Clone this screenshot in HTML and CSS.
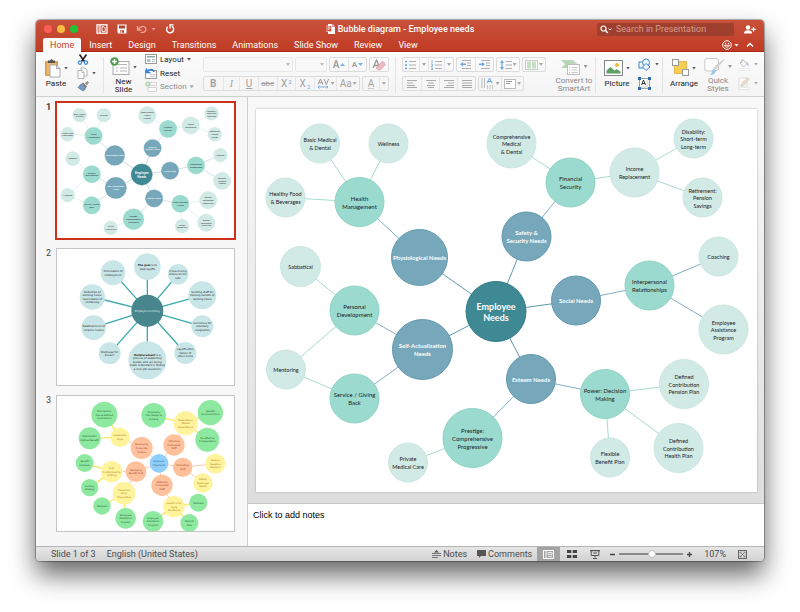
FILE: index.html
```html
<!DOCTYPE html>
<html lang="en">
<head>
    <meta charset="UTF-8">
    <meta name="viewport" content="width=device-width, initial-scale=1.0">
    <title>Bubble diagram - Employee needs</title>
    <link rel="stylesheet" href="styles.css">
</head>
<body>
    <div class="window">
        <header class="header">
            <div class="titlebar">
                <div class="titlebar-left">
                    <button class="light light-close" aria-label="Close"></button>
                    <button class="light light-min" aria-label="Minimize"></button>
                    <button class="light light-max" aria-label="Zoom"></button>
                    <div class="quick">
                        <button aria-label="Gallery"><svg width="12" height="10" viewBox="0 0 12 10"><rect x="1" y=".8" width="10" height="8.4" fill="none" stroke="#fff" stroke-width="1.3"/><path d="M4 1v8" stroke="#fff" stroke-width="1.2"/><path d="M2 3h1M2 5h1M2 7h1" stroke="#fff" stroke-width=".8"/><path d="M6 2.8h2l1.2 1.2v3.4H6z" fill="none" stroke="#fff" stroke-width=".9"/></svg></button>
                        <button aria-label="Save"><svg width="10" height="10" viewBox="0 0 10 10"><path d="M.5.5h9v9h-8l-1-1z" fill="#fff"/><path d="M2 1.4h6v3H2z" fill="#b8432d"/><path d="M3 6.3h4v2.5H3z" fill="#b8432d"/><path d="M3.6 7h1.2v1.8H3.6z" fill="#fff"/></svg></button>
                        <button class="faded" aria-label="Undo"><svg width="20" height="10" viewBox="0 0 20 10"><path d="M1.5 2v4h4M1.8 5.8C4 2.6 6 2 8 2.6c2.8.9 2.6 4.6-.6 5.800H4.500" fill="none" stroke="#fff" stroke-width="1.300"/><path d="M15.500 4h4l-2 2.600z" fill="#fff"/></svg></button>
                        <button aria-label="Redo"><svg width="10" height="10" viewBox="0 0 10 10"><path d="M6.800 2.200A3.500 3.500 0 1 1 2.600 2.800" fill="none" stroke="#fff" stroke-width="1.500"/><path d="M5 0v4.600M4.600.9h4" fill="none" stroke="#fff" stroke-width="1.300"/></svg></button>
                    </div>
                </div>
                <h1 class="doc-title">
                    <svg width="9" height="10" viewBox="0 0 9 10"><path d="M2 0h4.500L9 2.500V10H2z" fill="#fff"/><path d="M6.500 0v2.500H9" fill="none" stroke="#c34" stroke-width=".5"/><rect y="2" width="5.500" height="5.500" fill="#c9492f" stroke="#fff" stroke-width=".5"/><path d="M2 6.500V3.300h1.200q1 0 1 .9t-1 .9H2" fill="none" stroke="#fff" stroke-width=".7"/></svg>
                    Bubble diagram - Employee needs
                </h1>
                <div class="titlebar-right">
                    <label class="search">
                        <svg width="12" height="9" viewBox="0 0 12 9"><circle cx="3.500" cy="3.500" r="2.500" fill="none" stroke="#fff" stroke-width="1.200"/><path d="M5.300 5.300l2.500 2.700" stroke="#fff" stroke-width="1.400"/><path d="M8.500 3.500l1.500 1.500 1.500-1.500" fill="none" stroke="#fff"/></svg>
                        <input type="search" placeholder="Search in Presentation" aria-label="Search in Presentation">
                    </label>
                    <button class="share" aria-label="Share"><svg width="12" height="9" viewBox="0 0 12 9"><circle cx="4" cy="2.500" r="2.200" fill="#fff"/><path d="M0 8.500C0 5.800 1.500 5.200 4 5.200s4 .6 4 3.300z" fill="#fff"/><path d="M9.500 2v4.600M7.200 4.300h4.600" stroke="#fff" stroke-width="1.300"/></svg></button>
                </div>
            </div>
            <nav class="tabs">
                <a class="tab tab-active" href="#home">Home</a>
                <a class="tab" href="#insert">Insert</a>
                <a class="tab" href="#design">Design</a>
                <a class="tab" href="#transitions">Transitions</a>
                <a class="tab" href="#animations">Animations</a>
                <a class="tab" href="#slideshow">Slide Show</a>
                <a class="tab" href="#review">Review</a>
                <a class="tab" href="#view">View</a>
                <div class="tabs-right">
                    <button aria-label="Feedback"><svg width="17" height="10" viewBox="0 0 17 10"><circle cx="5" cy="5" r="4.300" fill="none" stroke="#fff"/><path d="M2.500 5.300a2.600 2.600 0 0 0 5 0z" fill="none" stroke="#fff" stroke-width=".9"/><circle cx="3.500" cy="3.500" r=".7" fill="#fff"/><circle cx="6.500" cy="3.500" r=".7" fill="#fff"/><path d="M12.500 4h4l-2 2.500z" fill="#fff"/></svg></button>
                    <button aria-label="Collapse ribbon"><svg width="8" height="6" viewBox="0 0 8 6"><path d="M1 4.500l3-3 3 3" fill="none" stroke="#fff" stroke-width="1.500"/></svg></button>
                </div>
            </nav>
        </header>

        <div class="ribbon">
            <div class="group group-clipboard">
                <button class="big">
                    <span class="big-top"><svg width="17" height="20" viewBox="0 0 17 20"><rect x="1" y="3" width="13" height="15" rx="1" fill="#dba24d"/><rect x="3" y="5" width="9" height="11" fill="#e9bb74"/><path d="M4 5V2.500h2Q7.500-.5 9 2.500h2V5z" fill="#555"/><path d="M6 7h6.500L16 10.500V19H6z" fill="#fff" stroke="#999" stroke-width=".8"/><path d="M12.500 7v3.500H16" fill="none" stroke="#999" stroke-width=".8"/></svg><i class="caret"></i></span>
                    <span>Paste</span>
                </button>
                <div class="stack">
                    <button aria-label="Cut"><svg width="12" height="11" viewBox="0 0 12 11"><path d="M2.500.5l5 7M9.500.5l-5 7" stroke="#222" stroke-width="1.600"/><circle cx="3" cy="8.600" r="1.700" fill="none" stroke="#3b8ede" stroke-width="1.200"/><circle cx="9" cy="8.600" r="1.700" fill="none" stroke="#3b8ede" stroke-width="1.200"/></svg></button>
                    <button aria-label="Copy"><svg width="11" height="12" viewBox="0 0 11 12"><g fill="#fff" stroke="#aaa" stroke-width=".9"><path d="M4 1h4l2 2v6H4z"/><path d="M1 3.500h4l2 2v6H1z"/><path d="M5 3.500v2h2"/></g></svg><i class="caret"></i></button>
                    <button aria-label="Format painter"><svg width="12" height="11" viewBox="0 0 12 11"><path d="M8 2.500L10.500.5l1 1L9.700 4" fill="#999" stroke="#777" stroke-width=".7"/><path d="M4.500 2.500l1.500-1 4 4-1.500 2z" fill="#777"/><path d="M4 3l4.500 5-2.500 2-5-3.500z" fill="#6d9cc9" stroke="#47698c" stroke-width=".6"/></svg></button>
                </div>
            </div>

            <div class="group group-slides">
                <button class="big">
                    <span class="big-top"><svg width="20" height="20" viewBox="0 0 20 20"><rect x="3" y="4.500" width="16" height="13" fill="#fff" stroke="#aaa"/><path d="M7 7.500h10M6 11h2M10 11h7M6 14h2M10 14h7" stroke="#b5b5b5"/><circle cx="4.500" cy="4.500" r="4.200" fill="#4a9e45"/><path d="M4.500 2v5M2 4.500h5" stroke="#fff" stroke-width="1.500"/></svg><i class="caret"></i></span>
                    <span>New<br>Slide</span>
                </button>
                <div class="stack stack-text">
                    <button><svg width="12" height="10" viewBox="0 0 12 10"><rect x=".5" y=".5" width="11" height="9" fill="#fff" stroke="#999"/><path d="M2 2.800h8" stroke="#8aa" stroke-width="1.500"/><rect x="2" y="5" width="3.500" height="3" fill="#a9c1d4"/><path d="M7 5.500h3M7 7.500h3" stroke="#aaa" stroke-width=".8"/></svg>Layout<i class="caret"></i></button>
                    <button><svg width="12" height="11" viewBox="0 0 12 11"><rect x=".5" y="2.500" width="11" height="8" fill="#fff" stroke="#999"/><path d="M5 6.500h5M5 8.500h5" stroke="#bbb" stroke-width=".8"/><path d="M1.500.5v4h4M1.800 4C4 .5 8 .5 9 4" fill="none" stroke="#2d7fd3" stroke-width="1.500"/></svg>Reset</button>
                    <button class="faded"><svg width="12" height="11" viewBox="0 0 12 11"><rect x="5" y="1.500" width="6.500" height="3" fill="#fff" stroke="#999" stroke-width=".7"/><rect x="3" y="6.500" width="8.500" height="4" fill="#fff" stroke="#999" stroke-width=".7"/><circle cx="2.800" cy="3" r="2.500" fill="#58a854"/><path d="M2.800 1.500v3M1.300 3h3" stroke="#fff" stroke-width=".8"/></svg>Section<i class="caret"></i></button>
                </div>
            </div>

            <div class="group group-font">
                <div class="tool-row">
                    <div class="combo combo-font"><select disabled aria-label="Font"><option></option></select></div>
                    <div class="combo combo-size"><select disabled aria-label="Font size"><option></option></select></div>
                    <div class="segment">
                        <button class="w18" aria-label="Increase font size"><b class="glyph">A</b><svg width="5" height="3" viewBox="0 0 5 3"><path d="M0 3L2.500 0 5 3z" fill="#7fb2e2"/></svg></button>
                        <button class="w18" aria-label="Decrease font size"><b>A</b><svg width="5" height="3" viewBox="0 0 5 3"><path d="M0 0h5L2.500 3z" fill="#7fb2e2"/></svg></button>
                    </div>
                    <div class="segment">
                        <button class="w18" aria-label="Clear formatting"><svg width="14" height="12" viewBox="0 0 14 12"><path d="M1 9L4.500 1 8 9M2.300 6.500h4.400" fill="none" stroke="#999" stroke-width="1.300"/><path d="M4.500 8.500l5-5.500q1-.8 2 0l1.500 1.400q.8.9 0 1.800l-4.500 4.600q-1 .8-2 0L4.500 9.800q-.5-.6 0-1.300z" fill="#eeb9c1" stroke="#d89aa5" stroke-width=".6"/></svg></button>
                    </div>
                </div>
                <div class="tool-row">
                    <div class="segment segment-fill">
                        <button class="w18"><b class="glyph">B</b></button>
                        <button class="w16"><i class="glyph serif">I</i></button>
                        <button class="w18"><u class="glyph">U</u></button>
                        <button class="w18"><s>abc</s></button>
                        <button class="w18"><span class="glyph">X</span><sup>2</sup></button>
                        <button class="w18"><span class="glyph">X</span><sub>2</sub></button>
                        <button class="w22" aria-label="Character spacing"><svg width="13" height="11" viewBox="0 0 13 11"><path d="M1 6.500L3.500 1 6 6.500M2 4.700h3M7 1l2.300 5.500L11.600 1" fill="none" stroke="#999"/><path d="M1 9h10M2.500 7.500L1 9l1.500 1.500M9.500 7.500L11 9l-1.500 1.500" fill="none" stroke="#7fb2e2"/></svg><i class="caret"></i></button>
                        <button class="w22" aria-label="Change case"><span class="glyph">Aa</span><i class="caret"></i></button>
                    </div>
                    <div class="segment">
                        <button class="w16"><span class="glyph underbar">A</span></button>
                        <button class="w8" aria-label="Font color"><i class="caret"></i></button>
                    </div>
                </div>
            </div>

            <div class="group group-paragraph">
                <div class="tool-row">
                    <div class="segment">
                        <button class="w16" aria-label="Bullets"><svg width="12" height="10" viewBox="0 0 12 10"><path d="M0 1.500h2M0 5h2M0 8.500h2" stroke="#6aa6df" stroke-width="1.600"/><path d="M4 1.500h7M4 5h7M4 8.500h7" stroke="#b0b0b0"/></svg></button>
                        <button class="w8" aria-label="Bullet styles"><i class="caret"></i></button>
                        <button class="w16" aria-label="Numbering"><svg width="12" height="10" viewBox="0 0 12 10"><path d="M1 0v3M0 4h1.500v1L.3 6.500h1.500M0 8h1.500v1.500H0" fill="none" stroke="#6aa6df" stroke-width=".8"/><path d="M4 1.500h7M4 5h7M4 8.500h7" stroke="#b0b0b0"/></svg></button>
                        <button class="w8" aria-label="Numbering styles"><i class="caret"></i></button>
                    </div>
                    <div class="segment">
                        <button class="w18" aria-label="Decrease indent"><svg width="12" height="9" viewBox="0 0 12 9"><path d="M2 .5h9M7 3h4M7 5.500h4M2 8.500h9" stroke="#b0b0b0"/><path d="M0 4.300L3 2v1.500h3v1.600H3v1.500z" fill="#6aa6df"/></svg></button>
                        <button class="w18" aria-label="Increase indent"><svg width="12" height="9" viewBox="0 0 12 9"><path d="M2 .5h9M7 3h4M7 5.500h4M2 8.500h9" stroke="#b0b0b0"/><path d="M6 4.300L3 2v1.500H0v1.600h3v1.500z" fill="#6aa6df"/></svg></button>
                    </div>
                    <div class="segment">
                        <button class="w22" aria-label="Line spacing"><svg width="12" height="10" viewBox="0 0 12 10"><path d="M2 1v8" stroke="#6aa6df" stroke-width="1.200"/><path d="M0 3L2 0l2 3zM0 7l2 3 2-3z" fill="#6aa6df"/><path d="M5.500 1.500H12M5.500 5H12M5.500 8.500H12" stroke="#b0b0b0"/></svg><i class="caret"></i></button>
                    </div>
                    <div class="segment">
                        <button class="w22" aria-label="Columns"><svg width="13" height="10" viewBox="0 0 13 10"><rect x=".5" y=".5" width="12" height="9" fill="#fff" stroke="#ccc"/><path d="M2 1.500h4v7H2zM7 1.500h4v7H7z" fill="#c5e0c2"/></svg><i class="caret"></i></button>
                    </div>
                </div>
                <div class="tool-row">
                    <div class="segment">
                        <button class="w18" aria-label="Align left"><svg width="10" height="8" viewBox="0 0 10 8"><path d="M0 .5h10M0 3h6M0 5.500h8M0 7.500h10" stroke="#aaa"/></svg></button>
                        <button class="w18" aria-label="Center"><svg width="10" height="8" viewBox="0 0 10 8"><path d="M0 .5h10M2 3h6M1 5.500h8M2 7.500h6" stroke="#aaa"/></svg></button>
                        <button class="w18" aria-label="Align right"><svg width="10" height="8" viewBox="0 0 10 8"><path d="M0 .5h10M4 3h6M2 5.500h8M0 7.500h10" stroke="#aaa"/></svg></button>
                        <button class="w18" aria-label="Justify"><svg width="10" height="8" viewBox="0 0 10 8"><path d="M0 .5h10M0 3h10M0 5.500h10M0 7.500h10" stroke="#aaa"/></svg></button>
                    </div>
                    <div class="segment">
                        <button class="w22" aria-label="Text direction"><svg width="14" height="11" viewBox="0 0 14 11"><path d="M1 0v10M3.500 0v10" stroke="#bbb"/><path d="M6 5l2.500-5L11 5M7 3.500h3" fill="none" stroke="#6aa6df"/><path d="M6.500 7v4M9 7v4M11.500 7v4" stroke="#bbb" stroke-width=".8"/></svg><i class="caret"></i></button>
                        <button class="w22" aria-label="Align text"><svg width="12" height="10" viewBox="0 0 12 10"><rect x=".5" y=".5" width="11" height="9" fill="#fff" stroke="#bbb"/><path d="M2 2.500h6M2 4.500h4" stroke="#999"/></svg><i class="caret"></i></button>
                    </div>
                </div>
            </div>

            <div class="group group-smartart">
                <button class="big disabled">
                    <span class="big-top"><svg width="20" height="18" viewBox="0 0 20 18"><path d="M0 2h12l4 4-4 4H0l4-4z" fill="#8fc08d"/><rect x="6.500" y="6.500" width="12" height="10" fill="#fff" stroke="#999"/><path d="M8 9.500h1M10.500 9.500h6M8 12h1M10.500 12h6M8 14.500h1M10.500 14.500h6" stroke="#aaa"/></svg><i class="caret"></i></span>
                    <span>Convert to<br>SmartArt</span>
                </button>
            </div>

            <div class="group group-insert">
                <button class="big">
                    <span class="big-top"><svg width="19" height="17" viewBox="0 0 19 17"><rect x=".5" y=".5" width="18" height="15" fill="#fff" stroke="#888"/><path d="M2.500 13.500v-3l4-3.500 4 3.500 2-1.500 4 2.500v2z" fill="#5fa163"/><circle cx="13" cy="5" r="2" fill="#efb93a"/></svg><i class="caret"></i></span>
                    <span>Picture</span>
                </button>
                <div class="stack">
                    <button aria-label="Shapes"><svg width="13" height="13" viewBox="0 0 13 13"><g fill="#eef5fc" stroke="#3f87d0"><rect x="1" y="4" width="6" height="6"/><circle cx="8" cy="4.500" r="3.500"/><path d="M8 5.500l4 3.500-4 3.500L4.500 9z"/></g></svg><i class="caret"></i></button>
                    <button aria-label="Text box"><svg width="13" height="13" viewBox="0 0 13 13"><rect x="1.500" y="1.500" width="10" height="10" fill="#fff" stroke="#999" stroke-width=".9"/><path d="M3.500 8L5.500 3l2 5M4 6.500h3" fill="none" stroke="#333"/><path d="M8.500 4h2M8.500 6h2M8.500 8h2M3 10h7" stroke="#aaa" stroke-width=".7"/><path d="M0 0h3v3H0zM10 0h3v3h-3zM0 10h3v3H0zM10 10h3v3h-3z" fill="#2d6cb0"/></svg></button>
                </div>
            </div>

            <div class="group group-drawing">
                <button class="big">
                    <span class="big-top"><svg width="17" height="18" viewBox="0 0 17 18"><rect x="2.500" y="2.500" width="12" height="12" fill="#f8cf52" stroke="#d9a634" stroke-width=".7"/><rect x=".5" y=".5" width="6" height="6" fill="#fff" stroke="#999"/><rect x="10.500" y="10.500" width="6" height="6" fill="#fff" stroke="#999"/></svg><i class="caret"></i></span>
                    <span>Arrange</span>
                </button>
                <button class="big disabled">
                    <span class="big-top"><svg width="21" height="19" viewBox="0 0 21 19"><path d="M3 1.500h9q2.500 0 2.500 2.500v7q0 3-3 3H3Q.8 14 .8 12V4q0-2.500 2.200-2.500z" fill="#fff" stroke="#aaa"/><path d="M20 2.500L12 12l-2-1.500z" fill="#ccc" stroke="#999" stroke-width=".7"/><path d="M10 11.500l2.300 1.700q-1 5-6.300 4.800 2.200-1.500 1.800-4 .6-2 2.200-2.500z" fill="#6ba6e0"/></svg><i class="caret"></i></span>
                    <span>Quick<br>Styles</span>
                </button>
                <div class="stack stack-tall faded">
                    <button aria-label="Shape fill"><svg width="12" height="13" viewBox="0 0 12 13"><path d="M2 5l3-3 4 3.500-3.500 3.500z" fill="#fff" stroke="#888"/><path d="M4 1v4" stroke="#888"/><path d="M8.500 4q2.500.5 2 4.500-1.500-1-2-4.500z" fill="#3f87d0"/><rect x=".5" y="10.500" width="11" height="2" fill="#fff" stroke="#ccc" stroke-width=".6"/></svg><i class="caret"></i></button>
                    <button aria-label="Shape outline"><svg width="12" height="13" viewBox="0 0 12 13"><path d="M1 1h8v8H1z" fill="#fff" stroke="#ccc"/><path d="M3 9l1-3 6-5.500L11.500 2 6 8z" fill="#e8c48a" stroke="#999" stroke-width=".6"/><rect x=".5" y="10.500" width="11" height="2" fill="#fff" stroke="#ccc" stroke-width=".6"/></svg><i class="caret"></i></button>
                </div>
            </div>
        </div>

        <main class="workspace">
            <ol class="slides">
                <li class="slide-item active">
                    <span class="slide-no">1</span>
                    <svg class="thumb" viewBox="0 0 1002 766" role="img" aria-label="Employee needs"><use href="#needs"/></svg>
                </li>
                <li class="slide-item">
                    <span class="slide-no">2</span>
                    <svg class="thumb policy" viewBox="0 0 531 406">
                        <path class="spokes" d="M271 185V53M271 185L168 71M271 185l92-109M271 185L106 144M271 185l165-46M271 185L110 236M271 185l165 47M271 185L158 313M271 185v149M271 185l114 127"/>
                        <g class="hub" transform="translate(271 185)"><circle r="48"/><text y="3">Employment Policy</text></g>
                        <g transform="translate(271 53)"><circle r="40"/><text y="-2"><tspan class="strong">The goal</tspan> is to</text><text y="9">stop layoffs</text></g>
                        <g transform="translate(168 71)"><circle r="37"/><text y="-2">Termination of</text><text y="9">employment</text></g>
                        <g transform="translate(363 76)"><circle r="31"/><text y="-8">Cross-mixing</text><text y="3">orders on the</text><text y="13">side</text></g>
                        <g transform="translate(106 144)"><circle r="38"/><text y="-12">Reduction of</text><text y="-2">working hours,</text><text y="8">cancellation of</text><text y="19">combining</text></g>
                        <g transform="translate(436 139)"><circle r="42"/><text y="-8">Sending staff for</text><text y="3">training outside of</text><text y="13">working hours</text></g>
                        <g transform="translate(110 236)"><circle r="37"/><text y="-2">Establishment of</text><text y="9">creative teams</text></g>
                        <g transform="translate(436 232)"><circle r="33"/><text y="-8">Incentives for</text><text y="3">voluntary</text><text y="13">resignation</text></g>
                        <g transform="translate(158 313)"><circle r="33"/><text y="-2">Dismissal for</text><text y="9">breach</text></g>
                        <g transform="translate(271 334)"><circle r="57"/><text y="-14"><tspan class="strong">Outplacement</tspan> is a</text><text y="-4">process of supporting</text><text y="7">people who are being</text><text y="17">made redundant in finding</text><text y="28">a new job elsewhere</text></g>
                        <g transform="translate(385 312)"><circle r="33"/><text y="-8">Layoffs after</text><text y="3">failure of</text><text y="13">other items</text></g>
                    </svg>
                </li>
                <li class="slide-item">
                    <span class="slide-no">3</span>
                    <svg class="thumb objectives" viewBox="0 0 531 406">
                        <path class="link-orange" d="M306 202l-52-46M306 202l45-55M306 202l-69 25M306 202l71 12M306 202l9 66M254 156l-65-32M351 147l35-65M237 227h-73M237 227l-36 65M377 214l98-11M377 214l61 47M315 268l36 64"/>
                        <path class="link-yellow" d="M189 124L142 56M189 124l-91 3M164 227L83 201M164 227l-66 48M201 292l-66 38M201 292l5 75M386 82l-96-24M386 82l74-32M386 82l65 49M351 332l73-12M351 332l46 49M351 332l-63 44"/>
                        <g class="blue" transform="translate(306 202)"><circle r="28"/><text y="-3">Employer</text><text y="8">Objectives</text></g>
                        <g class="orange" transform="translate(254 156)"><circle r="33"/><text y="-9">Developing</text><text y="3">Corporate</text><text y="14">Culture</text></g>
                        <g class="orange" transform="translate(351 147)"><circle r="32"/><text y="-8">Attracting</text><text y="3">Competent</text><text y="13">Staff</text></g>
                        <g class="orange" transform="translate(237 227)"><circle r="31"/><text y="-3">Managing</text><text y="8">Benefit Cost</text></g>
                        <g class="orange" transform="translate(377 214)"><circle r="29"/><text y="-3">Motivating</text><text y="8">Staff</text></g>
                        <g class="orange" transform="translate(315 268)"><circle r="32"/><text y="-8">Retaining</text><text y="3">Competent</text><text y="13">Staff</text></g>
                        <g class="yellow" transform="translate(189 124)"><circle r="29"/><text y="-3">Leadership</text><text y="8">Style</text></g>
                        <g class="yellow" transform="translate(164 227)"><circle r="32"/><text y="-8">Cost</text><text y="3">Containment &amp;</text><text y="13">Shifting</text></g>
                        <g class="yellow" transform="translate(201 292)"><circle r="34"/><text y="-8">Prevention</text><text y="3">Early</text><text y="13">Intervention</text></g>
                        <g class="yellow" transform="translate(386 82)"><circle r="36"/><text y="-8">Meet Labour</text><text y="3">Market</text><text y="13">Expectations</text></g>
                        <g class="yellow" transform="translate(475 203)"><circle r="30"/><text y="-8">Reduce</text><text y="3">Negative</text><text y="13">Stressors</text></g>
                        <g class="yellow" transform="translate(438 261)"><circle r="29"/><text y="-8">Satisfy</text><text y="3">Employee</text><text y="13">Needs</text></g>
                        <g class="yellow" transform="translate(351 332)"><circle r="32"/><text y="-8">Health of an</text><text y="3">Aging</text><text y="13">Workforce</text></g>
                        <g class="green" transform="translate(142 56)"><circle r="39"/><text y="-8">Participation:</text><text y="3">Flex &amp; Defined</text><text y="13">Contribution</text></g>
                        <g class="green" transform="translate(98 127)"><circle r="33"/><text y="-3">Paternalistic:</text><text y="8">Defined Benefit</text></g>
                        <g class="green" transform="translate(83 201)"><circle r="27"/><text y="-3">Benefit</text><text y="8">Schedule</text></g>
                        <g class="green" transform="translate(98 275)"><circle r="26"/><text y="-3">Funding</text><text y="8">Strategy</text></g>
                        <g class="green" transform="translate(135 330)"><circle r="26"/><text y="3">Wellness</text></g>
                        <g class="green" transform="translate(206 367)"><circle r="31"/><text y="-8">Employee</text><text y="3">Assistance</text><text y="13">Program</text></g>
                        <g class="green" transform="translate(290 58)"><circle r="37"/><text y="-8">Philosophy</text><text y="3">Plan Design &amp;</text><text y="13">Funding</text></g>
                        <g class="green" transform="translate(460 50)"><circle r="38"/><text y="-3">Benefit</text><text y="8">Communication</text></g>
                        <g class="green" transform="translate(451 131)"><circle r="36"/><text y="-3">Tax-effective</text><text y="8">Compensation</text></g>
                        <g class="green" transform="translate(424 320)"><circle r="27"/><text y="3">Wellness</text></g>
                        <g class="green" transform="translate(397 381)"><circle r="27"/><text y="-3">Medical</text><text y="8">Care</text></g>
                        <g class="green" transform="translate(288 376)"><circle r="31"/><text y="-8">Employee</text><text y="3">Assistance</text><text y="13">Program</text></g>
                    </svg>
                </li>
            </ol>

            <section class="editor">
                <div class="stage">
                    <svg class="slide" viewBox="0 0 1002 766">
                        <g id="needs" class="needs">
                            <path class="link-dark" d="M480 405L327 297M480 405l61-150M480 405l160-22M480 405l70 135M480 405l-147 76"/>
                            <path class="link-mid" d="M327 297L207 186M541 255l88-108M640 383l147-30M787 353l138-58M787 353l148 88M550 540l148 30M550 540L433 658M333 481l-136-78M333 481L197 579"/>
                            <path class="link-light" d="M207 186L128 69M207 186l58-117M207 186L59 177M197 403l-108-88M197 403L60 521M197 579L60 521M629 147L511 69M629 147l128-20M757 127l118-68M757 127l136 50M698 570l158-20M698 570l147 108M698 570l10 127M433 658l-129 49"/>

                            <g class="core" transform="translate(480 405)"><circle r="60"/><text y="-4">Employee</text><text y="18">Needs</text></g>

                            <g class="need" transform="translate(327 297)"><circle r="56"/><text y="5">Physiological Needs</text></g>
                            <g class="need" transform="translate(541 255)"><circle r="49"/><text y="-3">Safety &amp;</text><text y="13">Security Needs</text></g>
                            <g class="need" transform="translate(640 383)"><circle r="49"/><text y="5">Social Needs</text></g>
                            <g class="need" transform="translate(550 540)"><circle r="49"/><text y="5">Esteem Needs</text></g>
                            <g class="need" transform="translate(333 481)"><circle r="60"/><text y="-3">Self-Actualization</text><text y="13">Needs</text></g>

                            <g class="area" transform="translate(207 186)"><circle r="49"/><text y="-3">Health</text><text y="13">Management</text></g>
                            <g class="area" transform="translate(197 403)"><circle r="49"/><text y="-3">Personal</text><text y="13">Development</text></g>
                            <g class="area" transform="translate(197 579)"><circle r="49"/><text y="-3">Service / Giving</text><text y="13">Back</text></g>
                            <g class="area" transform="translate(433 658)"><circle r="59"/><text y="-11">Prestige:</text><text y="5">Comprehensive</text><text y="21">Progressive</text></g>
                            <g class="area" transform="translate(629 147)"><circle r="49"/><text y="-3">Financial</text><text y="13">Security</text></g>
                            <g class="area" transform="translate(787 353)"><circle r="49"/><text y="-3">Interpersonal</text><text y="13">Relationships</text></g>
                            <g class="area" transform="translate(698 570)"><circle r="49"/><text y="-3">Power: Decision</text><text y="13">Making</text></g>

                            <g class="leaf" transform="translate(128 69)"><circle r="39"/><text y="-3">Basic Medical</text><text y="12">&amp; Dental</text></g>
                            <g class="leaf" transform="translate(265 69)"><circle r="39"/><text y="4">Wellness</text></g>
                            <g class="leaf" transform="translate(59 177)"><circle r="39"/><text y="-3">Healthy Food</text><text y="12">&amp; Beverages</text></g>
                            <g class="leaf" transform="translate(89 315)"><circle r="40"/><text y="4">Sabbatical</text></g>
                            <g class="leaf" transform="translate(60 521)"><circle r="39"/><text y="4">Mentoring</text></g>
                            <g class="leaf" transform="translate(304 707)"><circle r="39"/><text y="-3">Private</text><text y="12">Medical Care</text></g>
                            <g class="leaf" transform="translate(511 69)"><circle r="49"/><text y="-10">Comprehensive</text><text y="5">Medical</text><text y="20">&amp; Dental</text></g>
                            <g class="leaf" transform="translate(757 127)"><circle r="49"/><text y="-3">Income</text><text y="12">Replacement</text></g>
                            <g class="leaf" transform="translate(875 59)"><circle r="39"/><text y="-10">Disability:</text><text y="5">Short-term</text><text y="20">Long-term</text></g>
                            <g class="leaf" transform="translate(893 177)"><circle r="39"/><text y="-10">Retirement:</text><text y="5">Pension</text><text y="20">Savings</text></g>
                            <g class="leaf" transform="translate(925 295)"><circle r="39"/><text y="4">Coaching</text></g>
                            <g class="leaf" transform="translate(935 441)"><circle r="49"/><text y="-10">Employee</text><text y="5">Assistance</text><text y="20">Program</text></g>
                            <g class="leaf" transform="translate(856 550)"><circle r="49"/><text y="-10">Defined</text><text y="5">Contribution</text><text y="20">Pension Plan</text></g>
                            <g class="leaf" transform="translate(845 678)"><circle r="49"/><text y="-10">Defined</text><text y="5">Contribution</text><text y="20">Health Plan</text></g>
                            <g class="leaf" transform="translate(708 697)"><circle r="39"/><text y="-3">Flexible</text><text y="12">Benefit Plan</text></g>
                        </g>
                    </svg>
                </div>
                <textarea class="notes" placeholder="Click to add notes" aria-label="Notes"></textarea>
            </section>
        </main>

        <footer class="statusbar">
            <span class="status-text">Slide 1 of 3</span>
            <span class="status-text">English (United States)</span>
            <div class="status-right">
                <button class="status-btn"><svg width="9" height="8" viewBox="0 0 9 8"><path d="M2 2.500L4.500 0 7 2.500z" fill="#555"/><path d="M0 3.500h9M0 5.500h9M0 7.500h6" stroke="#777"/></svg>Notes</button>
                <button class="status-btn"><svg width="9" height="8" viewBox="0 0 9 8"><path d="M0 0h9v6H4L2 8V6H0z" fill="#555"/></svg>Comments</button>
                <div class="views">
                    <button class="view view-active" aria-label="Normal view"><svg width="11" height="9" viewBox="0 0 11 9"><rect x=".5" y=".5" width="10" height="8" fill="none" stroke="#fff"/><path d="M3 1v7" stroke="#fff"/><path d="M5 2.500h4v2H5zM5 6.500h4" fill="none" stroke="#fff" stroke-width=".8"/></svg></button>
                    <button class="view" aria-label="Slide sorter"><svg width="10" height="8" viewBox="0 0 10 8"><path d="M0 0h4.300v3H0zM5.700 0H10v3H5.700zM0 5h4.300v3H0zM5.700 5H10v3H5.700z" fill="#444"/></svg></button>
                    <button class="view" aria-label="Slide show"><svg width="10" height="9" viewBox="0 0 10 9"><path d="M0 .7h10" stroke="#555" stroke-width="1.300"/><path d="M1.200 1v4.500h7.600V1M3 3h4M5 5.500v2M3 8.500h4" fill="none" stroke="#555"/></svg></button>
                </div>
                <button class="zoom-btn" aria-label="Zoom out"><svg width="5" height="5" viewBox="0 0 5 5"><path d="M0 2.500h5" stroke="#444" stroke-width="1.300"/></svg></button>
                <input class="zoom" type="range" min="0" max="100" value="51" aria-label="Zoom">
                <button class="zoom-btn" aria-label="Zoom in"><svg width="5" height="5" viewBox="0 0 5 5"><path d="M0 2.500h5M2.500 0v5" stroke="#444" stroke-width="1.300"/></svg></button>
                <span class="zoom-value">107%</span>
                <button class="fit" aria-label="Fit to window"><svg width="9" height="9" viewBox="0 0 9 9"><rect x=".5" y=".5" width="8" height="8" fill="none" stroke="#666"/><path d="M2 3.500V2h1.500M5.500 2H7v1.500M7 5.500V7H5.500M3.500 7H2V5.500M3 3l3 3M6 3L3 6" fill="none" stroke="#666" stroke-width=".8"/></svg></button>
            </div>
        </footer>
    </div>
</body>
</html>
```
FILE: styles.css
```css
* {
    margin: 0;
    padding: 0;
    box-sizing: border-box;
}

body {
    font-family: Roboto, "Liberation Sans", sans-serif;
    font-size: 9px;
    background: #fff;
    padding: 20px 36px 51px;
}

svg {
    display: block;
    flex: none;
}

button {
    font: inherit;
    color: inherit;
    background: none;
    border: none;
}

.faded {
    opacity: 0.5;
}

.window {
    background: #f7f7f7;
    border-radius: 4px;
    box-shadow: 0 0 1px 1px rgba(0,0,0,0.3), 0 14px 26px rgba(0,0,0,0.6);
    overflow: hidden;
}

/* Title bar and tabs */
.header {
    background: linear-gradient(#c9513a, #c03b24);
    border-bottom: 1px solid #a92a14;
    color: #fff;
}

.titlebar {
    display: grid;
    grid-template-columns: 1fr auto 1fr;
    align-items: center;
    height: 18px;
}

.titlebar-left,
.titlebar-right,
.quick {
    display: flex;
    align-items: center;
}

.titlebar-left {
    gap: 5px;
    padding-left: 8px;
}

.light {
    width: 8px;
    height: 8px;
    border-radius: 50%;
}

.light-close {
    background: #fc5d57;
}

.light-min {
    background: #fdbc40;
}

.light-max {
    background: #24c138;
}

.quick {
    gap: 9px;
    margin-left: 13px;
}

.doc-title {
    display: flex;
    align-items: center;
    gap: 3px;
    font-size: 9px;
    font-weight: 500;
}

.titlebar-right {
    justify-content: flex-end;
    gap: 10px;
    padding-right: 8px;
}

.search {
    display: flex;
    align-items: center;
    gap: 4px;
    width: 137px;
    height: 13px;
    padding: 0 3px;
    background: #9f3f2d;
    border-radius: 2px;
}

.search input {
    flex: 1;
    min-width: 0;
    font: inherit;
    color: #fff;
    background: none;
    border: none;
    outline: none;
}

.search input::placeholder {
    color: #d69c90;
}

.tabs {
    display: flex;
    align-items: center;
    height: 13px;
    padding-left: 7px;
}

.tab {
    padding: 0 8px;
    line-height: 14px;
    font-size: 9px;
    color: #fff;
    text-decoration: none;
}

.tab-active {
    padding: 0 7px;
    background: #fafafa;
    color: #c6402a;
    border-radius: 2px 2px 0 0;
}

.tabs-right {
    display: flex;
    align-items: center;
    gap: 7px;
    margin-left: auto;
    padding-right: 10px;
}

/* Ribbon */
.ribbon {
    display: flex;
    height: 45px;
    padding: 5px 7px 3px 8px;
    background: linear-gradient(#fbfbfb, #f4f4f4);
    border-bottom: 1px solid #d0d0d0;
    font-size: 8px;
    color: #222;
}

.group {
    display: flex;
    flex: none;
}

.group + .group {
    border-left: 1px solid #e3e3e3;
}

.group-clipboard {
    gap: 9px;
    width: 59px;
}

.group-slides {
    gap: 8px;
    width: 93px;
    padding-left: 6px;
}

.group-font,
.group-paragraph {
    flex-direction: column;
    gap: 4px;
    padding: 0 6px;
}

.group.group-font,
.group.group-smartart {
    border-left-color: transparent;
}

.group-smartart {
    width: 43px;
    justify-content: center;
}

.group-insert {
    gap: 8px;
    width: 67px;
    padding-left: 8px;
}

.group-drawing {
    gap: 6px;
    padding-left: 7px;
}

.big {
    display: flex;
    flex-direction: column;
    align-items: center;
    line-height: 8px;
    text-align: center;
    white-space: nowrap;
}

.big-top {
    display: flex;
    align-items: center;
    gap: 3px;
    height: 22px;
    margin-bottom: 1px;
}

.big.disabled {
    color: #888;
}

.disabled .big-top {
    opacity: 0.6;
}

.caret {
    flex: none;
    width: 4px;
    height: 3px;
    background: #555;
    clip-path: polygon(0 0, 100% 0, 50% 100%);
}

.stack {
    display: flex;
    flex-direction: column;
    gap: 1px;
    margin-top: -4px;
}

.stack button {
    display: flex;
    align-items: center;
    gap: 4px;
    height: 14px;
    white-space: nowrap;
}

.stack-text button {
    gap: 3px;
}

.stack-tall,
.group-insert .stack {
    gap: 5px;
    margin-top: 0;
}

.tool-row {
    display: flex;
    gap: 2px;
}

.segment {
    display: flex;
    height: 15px;
    border: 1px solid #dcdcdc;
    border-radius: 2px;
    color: #a2a2a2;
}

.segment button {
    display: flex;
    align-items: center;
    justify-content: center;
    gap: 1px;
}

.segment button + button {
    border-left: 1px solid #e6e6e6;
}

.segment-fill {
    flex: 1;
}

.segment-fill button {
    flex: 1 1 auto;
}

.segment .caret {
    background: #aaa;
}

.segment sup,
.segment sub {
    font-size: 6px;
    color: #6aa6df;
}

.segment sup {
    margin-top: -5px;
}

.segment sub {
    margin-bottom: -5px;
}

.w8 { width: 9px; }
.w16 { width: 16px; }
.w18 { width: 18px; }
.w22 { width: 22px; }

.glyph {
    font-size: 10px;
}

.serif {
    font-family: "Liberation Serif", serif;
}

.underbar {
    line-height: 9px;
    border-bottom: 1px solid #ccc;
}

.combo {
    position: relative;
    height: 15px;
}

.combo select {
    display: block;
    width: 100%;
    height: 100%;
    appearance: none;
    background: #f8f8f8;
    border: 1px solid #e0e0e0;
    border-radius: 2px;
}

.combo::after {
    content: "";
    position: absolute;
    top: 6px;
    right: 3px;
    width: 4px;
    height: 3px;
    background: #bbb;
    clip-path: polygon(0 0, 100% 0, 50% 100%);
}

.combo-font {
    width: 90px;
}

.combo-size {
    width: 32px;
}

/* Slide list and editor */
.workspace {
    display: flex;
}

.slides {
    display: flex;
    flex-direction: column;
    flex: none;
    gap: 7px;
    width: 212px;
    padding: 4px 11px 0 10px;
    border-right: 1px solid #cfcfcf;
    list-style: none;
}

.slide-item {
    display: flex;
}

.slide-no {
    width: 9px;
    line-height: 13px;
    color: #444;
}

.active .slide-no {
    font-weight: 700;
}

.thumb {
    flex: 1;
    min-width: 0;
    margin: 1px;
    background: #fff;
    border: 1px solid #c4c4c4;
}

.active .thumb {
    margin: 0;
    border: 2px solid #cf3019;
}

.editor {
    display: flex;
    flex-direction: column;
    flex: 1;
    min-width: 0;
}

.stage {
    padding: 12px 7px 11px 8px;
    background: linear-gradient(#f9f9f9, #dedede);
    border-bottom: 1px solid #c6c6c6;
}

.slide {
    width: 100%;
    background: #fff;
    box-shadow: 0 0 2px rgba(0,0,0,0.3);
}

.notes {
    flex: 1;
    min-height: 42px;
    padding: 6px 5px;
    font-family: "Liberation Sans", sans-serif;
    font-size: 9px;
    border: none;
    outline: none;
    resize: none;
}

.notes::placeholder {
    color: #000;
}

/* Diagrams */
svg text {
    text-anchor: middle;
}

.needs {
    font-family: Lato, sans-serif;
    stroke-width: 2;
}

.needs text,
.thumb text {
    stroke: none;
}

.link-dark {
    stroke: #5c9aad;
}

.link-mid {
    stroke: #83afc4;
}

.link-light {
    stroke: #a5dccf;
}

.core {
    fill: #fff;
    font-size: 18px;
    font-weight: 700;
}

.core circle {
    fill: #3f8995;
    stroke: #2f7b88;
}

.need {
    fill: #fff;
    font-size: 12px;
    font-weight: 700;
}

.need circle {
    fill: #76a7ba;
    stroke: #6299ae;
}

.area {
    fill: #222;
    font-size: 12px;
}

.area circle {
    fill: #9bdacf;
    stroke: #8dd3c6;
}

.leaf {
    fill: #222;
    font-size: 11px;
}

.leaf circle {
    fill: #d2eae5;
    stroke: #cbe6e0;
}

.policy,
.objectives {
    font-family: "DejaVu Sans", sans-serif;
    font-size: 8px;
}

.policy circle {
    fill: #c8e5e7;
}

.policy text {
    fill: #222;
}

.policy .hub circle {
    fill: #47868c;
}

.policy .hub text {
    fill: #e4f1f2;
}

.policy .strong {
    font-weight: 700;
}

.spokes {
    stroke: #3aa9ab;
    stroke-width: 4;
}

.objectives {
    font-size: 7px;
}

.link-orange {
    stroke: #fbcdb3;
    stroke-width: 3;
}

.link-yellow {
    stroke: #fbe75a;
    stroke-width: 4;
}

.blue circle {
    fill: #8fcffa;
}

.blue text {
    fill: #23608f;
}

.orange circle {
    fill: #fec19c;
}

.orange text {
    fill: #a3391c;
}

.yellow circle {
    fill: #fff39b;
}

.yellow text {
    fill: #a8741a;
}

.green circle {
    fill: #8de8a0;
}

.green text {
    fill: #1d5c2c;
}

/* Status bar */
.statusbar {
    display: flex;
    align-items: center;
    gap: 11px;
    height: 15px;
    padding-left: 15px;
    background: linear-gradient(#e6e6e6, #d2d2d2);
    border-top: 1px solid #b4b4b4;
    color: #4a4a4a;
}

.status-right {
    display: flex;
    align-items: center;
    height: 100%;
    margin-left: auto;
    padding-right: 17px;
}

.status-btn {
    display: flex;
    align-items: center;
    gap: 2px;
    margin-right: 10px;
}

.status-btn + .views {
    margin-left: -5px;
}

.views {
    display: flex;
    height: 100%;
}

.view {
    display: flex;
    align-items: center;
    justify-content: center;
    width: 23px;
}

.view-active {
    background: #a3a3a3;
}

.zoom-btn {
    margin: 0 4px;
}

.zoom {
    width: 64px;
    height: 10px;
    appearance: none;
    background: linear-gradient(#8a8a8a, #8a8a8a) center / 100% 2px no-repeat;
}

.zoom::-webkit-slider-thumb {
    appearance: none;
    width: 8px;
    height: 8px;
    background: #fff;
    border: 1px solid #bbb;
    border-radius: 50%;
}

.zoom-value {
    margin: 0 12px 0 8px;
}
```
